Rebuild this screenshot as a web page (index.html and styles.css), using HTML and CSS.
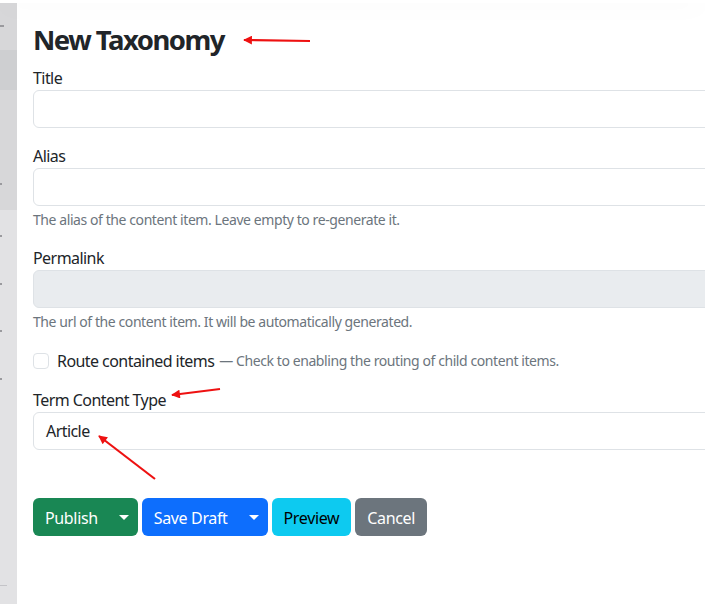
FILE: index.html
```html
<!DOCTYPE html>
<html lang="en">
<head>
<meta charset="utf-8">
<title>New Taxonomy</title>
<link rel="stylesheet" href="styles.css">
</head>
<body>
<div class="topbar"></div>
<div class="layout">
  <aside class="sidebar">
    <div class="seg seg-a"><span class="tick tick-1"></span></div>
    <div class="seg seg-b"></div>
    <div class="seg seg-c"><span class="tick tick-2"></span></div>
    <div class="seg seg-d">
      <span class="tick tick-3"></span>
      <span class="tick tick-4"></span>
      <span class="tick tick-5"></span>
      <span class="tick tick-6"></span>
      <span class="rule"></span>
    </div>
  </aside>
  <main class="content">
    <h2 class="page-title">New Taxonomy</h2>
    <form class="form">
      <div class="field">
        <label class="form-label">Title</label>
        <input class="form-control" type="text">
      </div>
      <div class="field">
        <label class="form-label">Alias</label>
        <input class="form-control" type="text">
        <div class="form-text">The alias of the content item. Leave empty to re-generate it.</div>
      </div>
      <div class="field">
        <label class="form-label">Permalink</label>
        <input class="form-control disabled" type="text" disabled>
        <div class="form-text">The url of the content item. It will be automatically generated.</div>
      </div>
      <div class="field check-row">
        <span class="check-box"></span>
        <span class="check-label">Route contained items</span>
        <span class="check-hint">&mdash; Check to enabling the routing of child content items.</span>
      </div>
      <div class="field">
        <label class="form-label">Term Content Type</label>
        <div class="form-select">Article</div>
      </div>
      <div class="actions">
        <div class="btn-group">
          <span class="btn btn-success">Publish</span>
          <span class="btn btn-success toggle"><span class="caret"></span></span>
        </div>
        <div class="btn-group">
          <span class="btn btn-primary">Save Draft</span>
          <span class="btn btn-primary toggle"><span class="caret"></span></span>
        </div>
        <span class="btn btn-info">Preview</span>
        <span class="btn btn-secondary">Cancel</span>
      </div>
    </form>
  </main>
</div>
<svg class="annotations" width="705" height="604" viewBox="0 0 705 604">
  <defs>
    <marker id="head" viewBox="0 0 10 10" refX="9" refY="5" markerWidth="5" markerHeight="4" orient="auto" markerUnits="strokeWidth">
      <path d="M0 0 L10 5 L0 10 z" fill="#ee1111"/>
    </marker>
  </defs>
  <line x1="310" y1="41" x2="244" y2="40" stroke="#ee1111" stroke-width="2.2" marker-end="url(#head)"/>
  <line x1="220" y1="389" x2="172" y2="395" stroke="#ee1111" stroke-width="2.2" marker-end="url(#head)"/>
  <line x1="155" y1="479" x2="99" y2="436" stroke="#ee1111" stroke-width="2.2" marker-end="url(#head)"/>
</svg>
</body>
</html>
```
FILE: styles.css
```css
* { box-sizing: border-box; }
html, body { margin: 0; padding: 0; }
body {
  width: 705px;
  height: 604px;
  overflow: hidden;
  position: relative;
  background: #fff;
  color: #212529;
  font-family: "Noto Sans", "Open Sans", sans-serif;
  font-size: 16px;
  line-height: 1.5;
  letter-spacing: -0.035em;
}
.topbar {
  height: 3px;
  background: #fff;
  position: relative;
  z-index: 2;
  box-shadow: 0 2px 26px rgba(0, 0, 0, 0.09);
}
.layout {
  display: flex;
  height: 601px;
}
.sidebar {
  flex: none;
  width: 17px;
  display: flex;
  flex-direction: column;
}
.seg { position: relative; }
.seg-a { height: 47px; background: #d7d7d9; }
.seg-b { height: 40px; background: #cecfd1; }
.seg-c { height: 120px; background: #d7d7d9; }
.seg-d { flex: 1; background: #e2e2e4; }
.tick {
  position: absolute;
  left: 0;
  width: 2px;
  height: 2px;
  background: #9a9a9e;
}
.tick-1 { top: 22px; width: 4px; }
.tick-2 { top: 93px; }
.tick-3 { top: 25px; }
.tick-4 { top: 73px; }
.tick-5 { top: 120px; }
.tick-6 { top: 168px; }
.rule {
  position: absolute;
  left: 0;
  top: 375px;
  width: 7px;
  height: 1px;
  background: #c4c4c8;
}
.content {
  flex: none;
  width: 740px;
  padding: 20px 0 0 16px;
}
.page-title {
  margin: 0 0 10px;
  font-size: 27.5px;
  line-height: 1.2;
  font-weight: 700;
  letter-spacing: -0.055em;
}
.form { width: 700px; }
.field { margin-bottom: 16px; }
.form-label {
  display: block;
  margin: 0;
  padding-top: 1px;
  line-height: 23px;
}
.form-control, .form-select {
  display: block;
  width: 100%;
  height: 38px;
  padding: 6px 12px;
  font: inherit;
  letter-spacing: inherit;
  color: #212529;
  background: #fff;
  border: 1px solid #dee2e6;
  border-radius: 6px;
}
.form-control.disabled { background: #e9ecef; }
.form-text {
  margin-top: 3px;
  font-size: 14px;
  line-height: 21px;
  color: #6c757d;
  letter-spacing: -0.03em;
}
.check-row {
  display: flex;
  align-items: center;
  height: 24px;
  padding-top: 1px;
}
.check-box {
  flex: none;
  width: 16px;
  height: 16px;
  border: 1px solid #dee2e6;
  border-radius: 4px;
  background: #fff;
  margin-right: 8px;
}
.check-label { white-space: nowrap; }
.check-hint {
  margin-left: 5px;
  font-size: 14px;
  color: #6c757d;
  white-space: nowrap;
  letter-spacing: -0.03em;
}
.actions {
  display: flex;
  gap: 4px;
  margin-top: 48px;
}
.btn-group { display: flex; }
.btn {
  display: inline-flex;
  align-items: center;
  height: 38px;
  padding: 1px 12px 0;
  border-radius: 6px;
  color: #fff;
  white-space: nowrap;
  letter-spacing: -0.022em;
}
.btn-group .btn:first-child { border-top-right-radius: 0; border-bottom-right-radius: 0; }
.btn-group .toggle {
  border-top-left-radius: 0;
  border-bottom-left-radius: 0;
  padding: 0 9px;
}
.caret {
  width: 0;
  height: 0;
  border-top: 5px solid #fff;
  border-left: 5px solid transparent;
  border-right: 5px solid transparent;
}
.btn-success { background: #198754; }
.btn-primary { background: #0d6efd; }
.btn-info { background: #0dcaf0; color: #000; }
.btn-secondary { background: #6c757d; }
.annotations {
  position: absolute;
  left: 0;
  top: 0;
  pointer-events: none;
  z-index: 5;
}
```
